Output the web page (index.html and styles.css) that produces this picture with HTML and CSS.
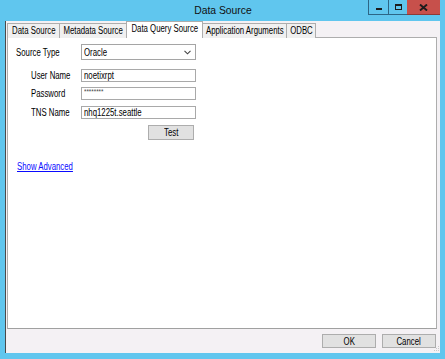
FILE: index.html
```html
<!DOCTYPE html>
<html>
<head>
<meta charset="utf-8">
<link rel="stylesheet" href="styles.css">
</head>
<body>
<div class="window">
  <div class="titlebar">
    <div class="spacer"></div>
    <div class="title"><span class="tx c tt">Data Source</span></div>
    <div class="controls">
      <div class="ctl min"><span class="min-glyph"></span></div>
      <div class="ctl max"><span class="max-glyph"></span></div>
      <div class="ctl close">
        <svg width="9" height="7" viewBox="0 0 9 7"><path d="M1 0.5 L8 6.5 M8 0.5 L1 6.5" stroke="#1c1c1c" stroke-width="1.9" fill="none"/></svg>
      </div>
    </div>
  </div>
  <div class="client">
    <div class="tabs">
      <div class="tab t1"><span class="tx c">Data Source</span></div>
      <div class="tab t2"><span class="tx c">Metadata Source</span></div>
      <div class="tab t3 active"><span class="tx c">Data Query Source</span></div>
      <div class="tab t4"><span class="tx c">Application Arguments</span></div>
      <div class="tab t5"><span class="tx c">ODBC</span></div>
    </div>
    <div class="panel">
      <div class="row r1">
        <div class="label"><span class="tx">Source Type</span></div>
        <div class="combo">
          <span class="tx">Oracle</span>
          <svg width="7" height="5" viewBox="0 0 7 5"><path d="M0.5 0.8 L3.5 3.8 L6.5 0.8" stroke="#444" stroke-width="1.1" fill="none"/></svg>
        </div>
      </div>
      <div class="row r2">
        <div class="label indent"><span class="tx">User Name</span></div>
        <div class="textbox"><span class="tx">noetixrpt</span></div>
      </div>
      <div class="row r3">
        <div class="label indent"><span class="tx">Password</span></div>
        <div class="textbox pw"><span class="tx">********</span></div>
      </div>
      <div class="row r4">
        <div class="label indent"><span class="tx">TNS Name</span></div>
        <div class="textbox"><span class="tx">nhq1225t.seattle</span></div>
      </div>
      <div class="row r5">
        <div class="label"></div>
        <div class="btn-col"><div class="button test"><span class="tx c">Test</span></div></div>
      </div>
      <div class="link-row"><span class="tx link">Show Advanced</span></div>
    </div>
    <div class="footer">
      <div class="button ok"><span class="tx c">OK</span></div>
      <div class="button cancel"><span class="tx c">Cancel</span></div>
    </div>
    <svg class="grip" width="6" height="6" viewBox="0 0 6 6">
      <rect x="4" y="0" width="1" height="1" fill="#c8c8c8"/>
      <rect x="2" y="2" width="1" height="1" fill="#c8c8c8"/>
      <rect x="4" y="2" width="1" height="1" fill="#c8c8c8"/>
      <rect x="0" y="4" width="1" height="1" fill="#c8c8c8"/>
      <rect x="2" y="4" width="1" height="1" fill="#c8c8c8"/>
      <rect x="4" y="4" width="1" height="1" fill="#c8c8c8"/>
    </svg>
  </div>
</div>
</body>
</html>
```

FILE: styles.css
```css
* { box-sizing: border-box; }
html, body { margin: 0; padding: 0; }
body {
  width: 445px;
  height: 359px;
  overflow: hidden;
  background: #60c6ee;
  font-family: "Liberation Sans", Arial, sans-serif;
  font-size: 10px;
  color: #000;
}
.tx {
  display: inline-block;
  white-space: nowrap;
  transform: scaleX(0.78);
  transform-origin: left center;
}
.tx.c { transform-origin: center center; flex: none; }
.window {
  width: 445px;
  height: 359px;
  display: flex;
  flex-direction: column;
}
.titlebar {
  height: 21px;
  flex: none;
  display: grid;
  grid-template-columns: 1fr auto 1fr;
  align-items: start;
}
.title {
  font-size: 11.5px;
  line-height: 21px;
  color: #111;
  display: flex;
  justify-content: center;
}
.tx.tt { transform: scaleX(0.9); }
.controls {
  justify-self: end;
  margin-right: 5px;
  display: flex;
  height: 15px;
}
.ctl {
  height: 15px;
  display: flex;
  align-items: center;
  justify-content: center;
}
.min, .max {
  width: 20px;
  border-left: 1px solid #2d6686;
  border-bottom: 1px solid #2d6686;
}
.max { width: 19px; }
.min-glyph {
  width: 6px;
  height: 2px;
  background: #1c1c1c;
  margin-top: 4px;
}
.max-glyph {
  width: 7px;
  height: 6px;
  border: 1px solid #1c1c1c;
  border-top-width: 2px;
}
.close {
  width: 33px;
  background: #c7504b;
  border-bottom: 1px solid #8f3a36;
}
.client {
  position: relative;
  flex: 1;
  margin: 0 5px 6px 5px;
  background: #f4f1f4;
  border-left: 1px solid #4a4a4a;
  padding: 0 3px 0 1px;
  display: flex;
  flex-direction: column;
}
.tabs {
  display: flex;
  align-items: flex-end;
  height: 17px;
  margin-bottom: -1px;
  position: relative;
  z-index: 2;
}
.tab {
  height: 15px;
  border: 1px solid #adadad;
  border-bottom: none;
  background: #f0f0f0;
  display: flex;
  justify-content: center;
  align-items: center;
  margin-left: -1px;
  padding-bottom: 1px;
}
.t1 { margin-left: 0; width: 53px; }
.t2 { width: 68px; }
.t3 { width: 77px; }
.t4 { width: 85px; }
.t5 { width: 30px; }
.tab.active {
  height: 17px;
  background: #fff;
  padding-bottom: 3px;
  position: relative;
  z-index: 3;
}
.panel {
  flex: 1;
  background: #fff;
  border: 1px solid #adadad;
  border-bottom-color: #a0a0a0;
  padding: 6px 0 0 8px;
  position: relative;
  z-index: 1;
}
.row {
  display: flex;
  align-items: center;
}
.label {
  width: 65px;
  flex: none;
  white-space: nowrap;
}
.label.indent { padding-left: 15px; }
.combo {
  width: 115px;
  height: 16px;
  border: 1px solid #a5a5a5;
  background: #fff;
  display: flex;
  align-items: center;
  justify-content: space-between;
  padding: 0 4px 0 2px;
}
.textbox {
  width: 115px;
  height: 13px;
  border: 1px solid #a9a9a9;
  background: #fff;
  padding-left: 2px;
  line-height: 11px;
  white-space: nowrap;
  overflow: hidden;
}
.textbox.pw {
  font-size: 8px;
  line-height: 7px;
  color: #444;
}
.r2 { margin-top: 9px; }
.r3 { margin-top: 5px; }
.r4 { margin-top: 6px; }
.r5 { margin-top: 6px; }
.btn-col {
  width: 113px;
  display: flex;
  justify-content: flex-end;
}
.button {
  background: #e1e1e1;
  border: 1px solid #adadad;
  display: flex;
  justify-content: center;
  align-items: center;
}
.test {
  width: 46px;
  height: 15px;
}
.link-row {
  margin-top: 21px;
  padding-left: 1px;
}
.link {
  color: #0a0aff;
  text-decoration: underline;
}
.footer {
  height: 24px;
  flex: none;
  display: flex;
  justify-content: flex-end;
  align-items: flex-start;
  padding-top: 5px;
  padding-right: 1px;
  gap: 6px;
}
.ok, .cancel {
  width: 54px;
  height: 14px;
}
.grip {
  position: absolute;
  right: 0;
  bottom: 1px;
}
```
